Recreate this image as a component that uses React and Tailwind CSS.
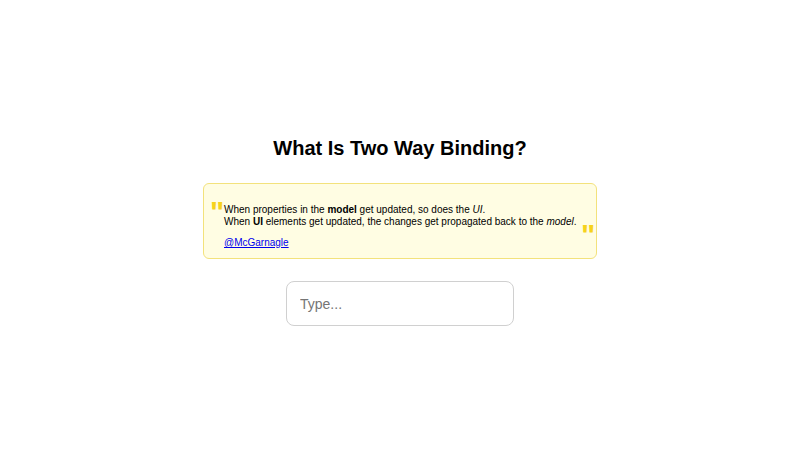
import { useState } from "react";

export default function App() {
  const [text, setText] = useState("");

  return (
    <div
      className="w-[800px] h-[450px] bg-white flex flex-col items-center pt-[135px]"
      style={{ fontFamily: '"Liberation Sans", Arial, sans-serif' }}
    >
      <h1 className="text-[20px] font-bold leading-[26px] text-black">
        What Is Two Way Binding?
      </h1>

      <div className="mt-[22px] w-[394px] h-[76px] bg-[#fffde3] border border-[#f3e27c] rounded-md flex pl-[6px] pr-[5px]">
        <span className="text-[30px] font-bold leading-none text-[#f6d21c] pt-[13px] w-[14px] shrink-0">
          "
        </span>
        <div className="flex-1 pt-[20px] text-[10px] leading-[12px] text-black whitespace-nowrap">
          <p>
            When properties in the <b>model</b> get updated, so does the <i>UI</i>.
            <br />
            When <b>UI</b> elements get updated, the changes get propagated back to the <i>model</i>.
          </p>
          <a href="#" className="block mt-[9px] text-[#0000ee] underline">
            @McGarnagle
          </a>
        </div>
        <span className="text-[30px] font-bold leading-none text-[#f6d21c] self-end pb-[8px] w-[10px] shrink-0">
          "
        </span>
      </div>

      <input
        type="text"
        value={text}
        onChange={(e) => setText(e.target.value)}
        placeholder="Type..."
        className="mt-[22px] w-[228px] h-[45px] border border-[#d0d0d0] rounded-lg px-[13px] text-[14px] text-black placeholder-[#757575] outline-none"
      />
    </div>
  );
}
